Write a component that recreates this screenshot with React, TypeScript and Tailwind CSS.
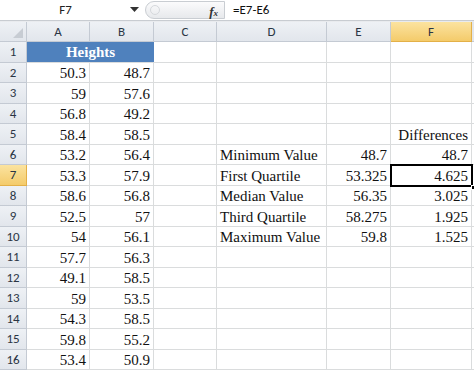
import React from "react";

const colA = ["50.3", "59", "56.8", "58.4", "53.2", "53.3", "58.6", "52.5", "54", "57.7", "49.1", "59", "54.3", "59.8", "53.4"];
const colB = ["48.7", "57.6", "49.2", "58.5", "56.4", "57.9", "56.8", "57", "56.1", "56.3", "58.5", "53.5", "58.5", "55.2", "50.9"];

// stats block, rows 6-10
const stats: Record<number, [string, string, string]> = {
  6: ["Minimum Value", "48.7", "48.7"],
  7: ["First Quartile", "53.325", "4.625"],
  8: ["Median Value", "56.35", "3.025"],
  9: ["Third Quartile", "58.275", "1.925"],
  10: ["Maximum Value", "59.8", "1.525"],
};

const grid = "grid grid-cols-[27px_63px_64px_63px_110px_64px_81px_1fr]";
const serif = { fontFamily: '"Liberation Serif", "Times New Roman", serif' };
const sans = { fontFamily: 'Calibri, "Open Sans", "Liberation Sans", sans-serif' };

function Cell({ children, align = "right" }: { children?: React.ReactNode; align?: "left" | "right" }) {
  return (
    <div
      className={`h-[20.5px] border-r border-b border-[#dadcdd] bg-white flex items-end pb-[1px] px-[3px] text-[15px] leading-none text-[#111] whitespace-nowrap overflow-visible ${
        align === "right" ? "justify-end" : "justify-start"
      }`}
      style={serif}
    >
      {children}
    </div>
  );
}

function RowHead({ n, active }: { n: number; active?: boolean }) {
  return (
    <div
      className={`h-[20.5px] border-r border-b flex items-center justify-center text-[13px] text-[#2a3544] ${
        active
          ? "bg-gradient-to-b from-[#fbe39f] to-[#f4cb6a] border-[#e3b048]"
          : "bg-gradient-to-b from-[#eef1f5] to-[#e2e6ec] border-[#c4cad3]"
      }`}
      style={sans}
    >
      {n}
    </div>
  );
}

export default function App() {
  const rows = Array.from({ length: 15 }, (_, i) => i + 2);

  return (
    <div className="w-[474px] h-[375px] overflow-hidden bg-white relative">
      {/* formula bar */}
      <div className="h-[20px] flex items-center bg-white" style={sans}>
        <div className="w-[128px] text-center text-[13px] text-[#222] pl-[3px]">F7</div>
        <svg width="9" height="6" viewBox="0 0 9 6" className="ml-[2px]">
          <path d="M0 0 L9 0 L4.5 5 Z" fill="#333" />
        </svg>
        <div className="ml-[6px] h-[18px] w-[80px] rounded-l-full border border-[#c9cdd2] bg-gradient-to-b from-[#fbfbfc] to-[#e7e9ec] flex items-center relative">
          <div className="ml-[4px] w-[10px] h-[10px] rounded-full border border-[#d5d8dc]" />
          <span
            className="absolute right-[6px] top-[0px] text-[13px] italic font-bold text-[#333]"
            style={serif}
          >
            f<span className="text-[9px]">x</span>
          </span>
        </div>
        <div className="ml-[8px] text-[13px] text-[#111]">=E7-E6</div>
      </div>
      <div className="h-[2px] border-t border-[#c8ccd1] bg-[#e9ebee]" />

      {/* column headers */}
      <div className={grid}>
        <div className="h-[20px] border-r border-b border-[#c4cad3] bg-gradient-to-b from-[#eef1f5] to-[#e2e6ec] relative">
          <svg width="10" height="10" viewBox="0 0 10 10" className="absolute right-[3px] bottom-[3px]">
            <path d="M10 0 L10 10 L0 10 Z" fill="#c7ccd3" />
          </svg>
        </div>
        {["A", "B", "C", "D", "E"].map((c) => (
          <div
            key={c}
            className="h-[20px] border-r border-b border-[#c4cad3] bg-gradient-to-b from-[#eef1f5] to-[#e2e6ec] flex items-center justify-center text-[13px] text-[#2a3544]"
            style={sans}
          >
            {c}
          </div>
        ))}
        <div
          className="h-[20px] border-r border-b border-[#e3b048] bg-gradient-to-b from-[#fbe39f] to-[#f4cb6a] flex items-center justify-center text-[13px] text-[#2a3544]"
          style={sans}
        >
          F
        </div>
        <div className="h-[20px] border-b border-[#c4cad3] bg-[#e2e6ec]" />
      </div>

      {/* row 1 */}
      <div className={grid}>
        <RowHead n={1} />
        <div
          className="col-span-2 h-[20.5px] bg-[#4f81bd] border-b border-[#dadcdd] flex items-center justify-center text-[15px] font-bold text-white"
          style={serif}
        >
          Heights
        </div>
        <Cell />
        <Cell />
        <Cell />
        <Cell />
        <div className="h-[20.5px] border-b border-[#dadcdd]" />
      </div>

      {rows.map((r) => {
        const s = stats[r];
        return (
          <div key={r} className={grid}>
            <RowHead n={r} active={r === 7} />
            <Cell>{colA[r - 2]}</Cell>
            <Cell>{colB[r - 2]}</Cell>
            <Cell />
            <Cell align="left">{s ? s[0] : null}</Cell>
            <Cell>{s ? s[1] : null}</Cell>
            {r === 7 ? (
              <div className="relative">
                <Cell>{s[2]}</Cell>
                <div className="absolute inset-[-1px] border-2 border-black pointer-events-none" />
                <div className="absolute right-[-4px] bottom-[-4px] w-[5px] h-[5px] bg-black border border-white" />
              </div>
            ) : (
              <Cell>{r === 5 ? "Differences" : s ? s[2] : null}</Cell>
            )}
            <div className="h-[20.5px] border-b border-[#dadcdd]" />
          </div>
        );
      })}
    </div>
  );
}
